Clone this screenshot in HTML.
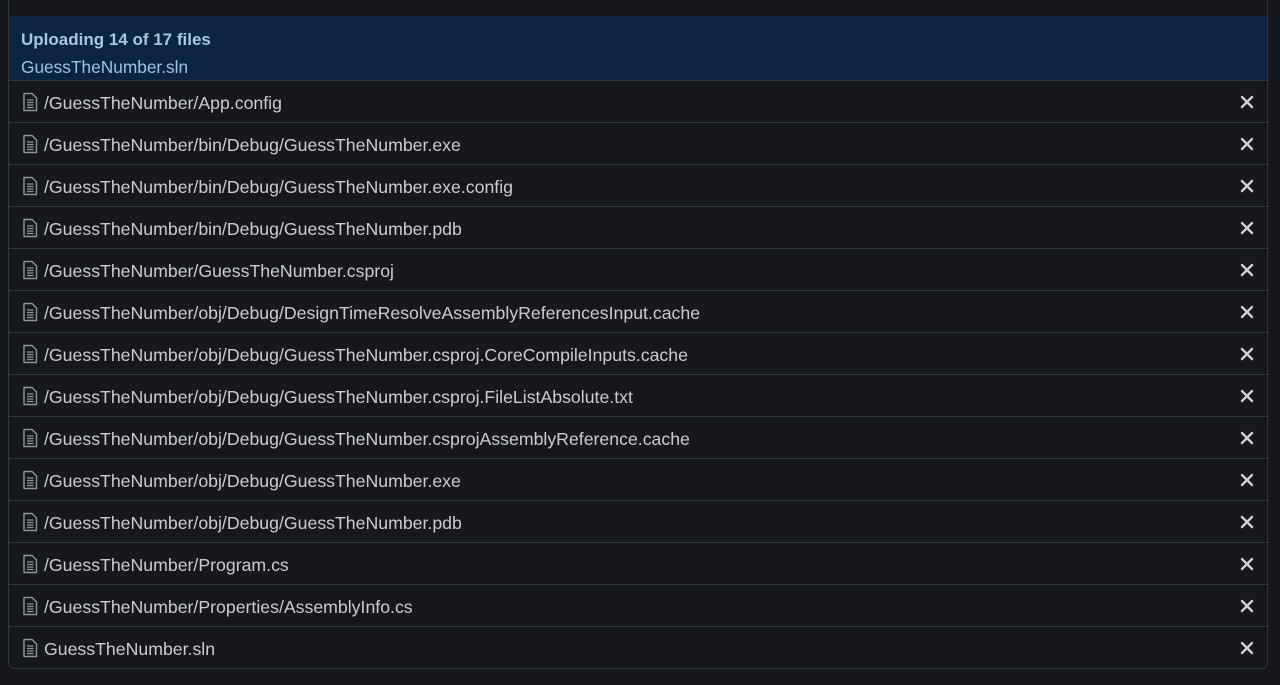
<!DOCTYPE html>
<html><head><style>
body{margin:0;background:#16181d;width:1280px;height:685px;overflow:hidden;font-family:"Liberation Sans",sans-serif;}
.box{position:absolute;left:8px;top:-10px;width:1258px;height:677px;border:1px solid #30363d;border-radius:6px;background:#16181d;}
.hdr{position:absolute;left:9px;top:16px;width:1258px;height:64px;background:#0c2440;border-bottom:1px solid #30363d;}
.hdr .t{position:absolute;left:12px;top:14px;font-size:17px;font-weight:bold;color:#a8c7e6;}
.hdr .f{position:absolute;left:12px;top:41px;font-size:17.3px;color:#9cc3ea;}
.row{position:absolute;left:9px;width:1258px;height:41px;border-bottom:1px solid #30363d;}
.row:last-child{border-bottom:none}
.row svg{position:absolute;left:12px;top:11px}
.row span{position:absolute;left:35px;top:12px;font-size:17.7px;color:#c9cdd2;}
.row .x{position:absolute;left:1231px;top:14px}
</style></head><body>
<div class="box"></div>
<div class="hdr"><div class="t">Uploading 14 of 17 files</div><div class="f">GuessTheNumber.sln</div></div>
<div id="rows"></div>
<script>
var f=["/GuessTheNumber/App.config","/GuessTheNumber/bin/Debug/GuessTheNumber.exe","/GuessTheNumber/bin/Debug/GuessTheNumber.exe.config","/GuessTheNumber/bin/Debug/GuessTheNumber.pdb","/GuessTheNumber/GuessTheNumber.csproj","/GuessTheNumber/obj/Debug/DesignTimeResolveAssemblyReferencesInput.cache","/GuessTheNumber/obj/Debug/GuessTheNumber.csproj.CoreCompileInputs.cache","/GuessTheNumber/obj/Debug/GuessTheNumber.csproj.FileListAbsolute.txt","/GuessTheNumber/obj/Debug/GuessTheNumber.csprojAssemblyReference.cache","/GuessTheNumber/obj/Debug/GuessTheNumber.exe","/GuessTheNumber/obj/Debug/GuessTheNumber.pdb","/GuessTheNumber/Program.cs","/GuessTheNumber/Properties/AssemblyInfo.cs","GuessTheNumber.sln"];
var h="";f.forEach(function(s,i){h+='<div class="row" style="top:'+(81+i*42)+'px"><svg width="18" height="20" viewBox="0 0 18 20"><path d="M3 1.5h8l4.5 4.5v12.5h-12.5z" fill="none" stroke="#8b949e" stroke-width="1.4" stroke-linejoin="round"/><path d="M6 8h6.5M6 10.5h6.5M6 13h6.5M6 15.5h6.5" stroke="#8b949e" stroke-width="1.2"/></svg><span>'+s+'</span><svg class="x" width="14" height="14" viewBox="0 0 14 14"><path d="M2 2L12 12M12 2L2 12" stroke="#d0d0d0" stroke-width="2.4" stroke-linecap="round"/></svg></div>';});
document.getElementById("rows").innerHTML=h;
</script>
</body></html>
